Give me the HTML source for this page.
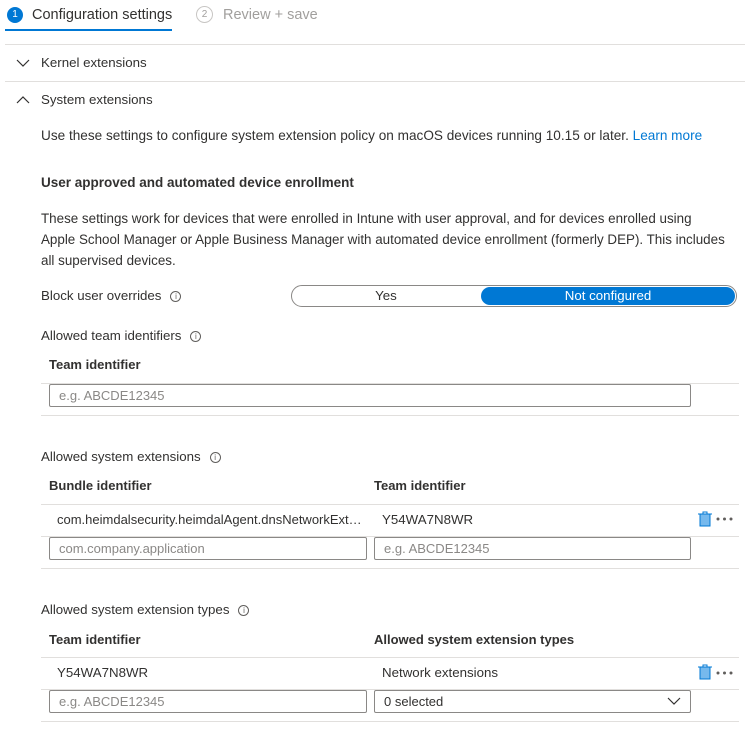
<!DOCTYPE html>
<html><head><style>
body{margin:0;width:745px;height:733px;background:#fff;font-family:"Liberation Sans",sans-serif;font-size:13.3px;color:#323130;position:relative;overflow:hidden}
.a{position:absolute;white-space:nowrap;line-height:18px}
.hl{position:absolute;height:1px;background:#e1dfdd}
.inp{position:absolute;border:1px solid #8a8886;border-radius:2px;box-sizing:border-box;height:23px;color:#8a8886;padding:3px 9px;line-height:16px;font-size:13px}
.info{display:inline-block;vertical-align:1px;margin-left:9px;width:9px;height:9px;border:1px solid #605e5c;border-radius:50%;font-size:8px;line-height:9px;text-align:center;color:#605e5c}
.b{font-weight:bold;font-size:13px}
</style></head><body>
<div class="a" style="left:7px;top:7px;width:16px;height:16px;border-radius:50%;background:#0078d4;color:#fff;font-size:10px;text-align:center;line-height:16px">1</div>
<div class="a" style="left:32px;top:6px;font-size:14.5px">Configuration settings</div>
<div class="a" style="left:5px;top:29px;width:167px;height:2px;background:#0078d4"></div>
<div class="a" style="left:196px;top:6px;width:15px;height:15px;border-radius:50%;border:1px solid #c8c6c4;color:#a19f9d;font-size:10px;text-align:center;line-height:15px">2</div>
<div class="a" style="left:223px;top:6px;font-size:14.5px;color:#a19f9d">Review + save</div>
<div class="hl" style="left:5px;top:44px;width:740px"></div>
<svg class="a" style="left:16px;top:58px" width="14" height="10"><path d="M1 2l6 6 6-6" fill="none" stroke="#323130" stroke-width="1.2"/></svg>
<div class="a" style="left:41px;top:54px">Kernel extensions</div>
<div class="hl" style="left:5px;top:81px;width:740px"></div>
<svg class="a" style="left:16px;top:95px" width="14" height="10"><path d="M1 8l6-6 6 6" fill="none" stroke="#323130" stroke-width="1.2"/></svg>
<div class="a" style="left:41px;top:91px">System extensions</div>
<div class="a" style="left:41px;top:127px;font-size:13.6px">Use these settings to configure system extension policy on macOS devices running 10.15 or later. <span style="color:#0078d4">Learn more</span></div>
<div class="a b" style="left:41px;top:174px;font-size:13.5px">User approved and automated device enrollment</div>
<div class="a" style="left:41px;top:208px;line-height:21px;font-size:13.4px">These settings work for devices that were enrolled in Intune with user approval, and for devices enrolled using<br>Apple School Manager or Apple Business Manager with automated device enrollment (formerly DEP). This includes<br>all supervised devices.</div>
<div class="a" style="left:41px;top:287px">Block user overrides<span class="info">i</span></div>
<div class="a" style="left:291px;top:285px;width:446px;height:22px;border:1px solid #8a8886;border-radius:11px;box-sizing:border-box"></div>
<div class="a" style="left:481px;top:287px;width:254px;height:18px;border-radius:9px;background:#0078d4;color:#fff;text-align:center;line-height:18px">Not configured</div>
<div class="a" style="left:291px;top:287px;width:190px;text-align:center">Yes</div>
<div class="a" style="left:41px;top:327px">Allowed team identifiers<span class="info">i</span></div>
<div class="a b" style="left:49px;top:356px">Team identifier</div>
<div class="hl" style="left:41px;top:383px;width:698px"></div>
<div class="inp" style="left:49px;top:384px;width:642px">e.g. ABCDE12345</div>
<div class="hl" style="left:41px;top:415px;width:698px"></div>
<div class="a" style="left:41px;top:448px">Allowed system extensions<span class="info">i</span></div>
<div class="a b" style="left:49px;top:477px">Bundle identifier</div>
<div class="a b" style="left:374px;top:477px">Team identifier</div>
<div class="hl" style="left:41px;top:504px;width:698px"></div>
<div class="a" style="left:57px;top:511px;font-size:13px">com.heimdalsecurity.heimdalAgent.dnsNetworkExt…</div>
<div class="a" style="left:382px;top:511px">Y54WA7N8WR</div>
<svg class="a" style="left:697px;top:511px" width="16" height="17"><rect x="3" y="3" width="10" height="12" fill="#76b9ed" stroke="#0078d4"/><path d="M1 3h14M6 3V1h4v2" fill="none" stroke="#0078d4"/></svg>
<svg class="a" style="left:716px;top:517px" width="18" height="4"><circle cx="2" cy="2" r="1.5" fill="#605e5c"/><circle cx="8.5" cy="2" r="1.5" fill="#605e5c"/><circle cx="15" cy="2" r="1.5" fill="#605e5c"/></svg>
<div class="hl" style="left:41px;top:536px;width:698px"></div>
<div class="inp" style="left:49px;top:537px;width:318px">com.company.application</div>
<div class="inp" style="left:374px;top:537px;width:317px">e.g. ABCDE12345</div>
<div class="hl" style="left:41px;top:568px;width:698px"></div>
<div class="a" style="left:41px;top:601px">Allowed system extension types<span class="info">i</span></div>
<div class="a b" style="left:49px;top:631px">Team identifier</div>
<div class="a b" style="left:374px;top:631px">Allowed system extension types</div>
<div class="hl" style="left:41px;top:657px;width:698px"></div>
<div class="a" style="left:57px;top:664px">Y54WA7N8WR</div>
<div class="a" style="left:382px;top:664px">Network extensions</div>
<svg class="a" style="left:697px;top:664px" width="16" height="17"><rect x="3" y="3" width="10" height="12" fill="#76b9ed" stroke="#0078d4"/><path d="M1 3h14M6 3V1h4v2" fill="none" stroke="#0078d4"/></svg>
<svg class="a" style="left:716px;top:671px" width="18" height="4"><circle cx="2" cy="2" r="1.5" fill="#605e5c"/><circle cx="8.5" cy="2" r="1.5" fill="#605e5c"/><circle cx="15" cy="2" r="1.5" fill="#605e5c"/></svg>
<div class="hl" style="left:41px;top:689px;width:698px"></div>
<div class="inp" style="left:49px;top:690px;width:318px">e.g. ABCDE12345</div>
<div class="inp" style="left:374px;top:690px;width:317px;color:#323130">0 selected</div>
<svg class="a" style="left:667px;top:697px" width="14" height="9"><path d="M1 1l6 6 6-6" fill="none" stroke="#323130" stroke-width="1.2"/></svg>
<div class="hl" style="left:41px;top:721px;width:698px"></div>
</body></html>
